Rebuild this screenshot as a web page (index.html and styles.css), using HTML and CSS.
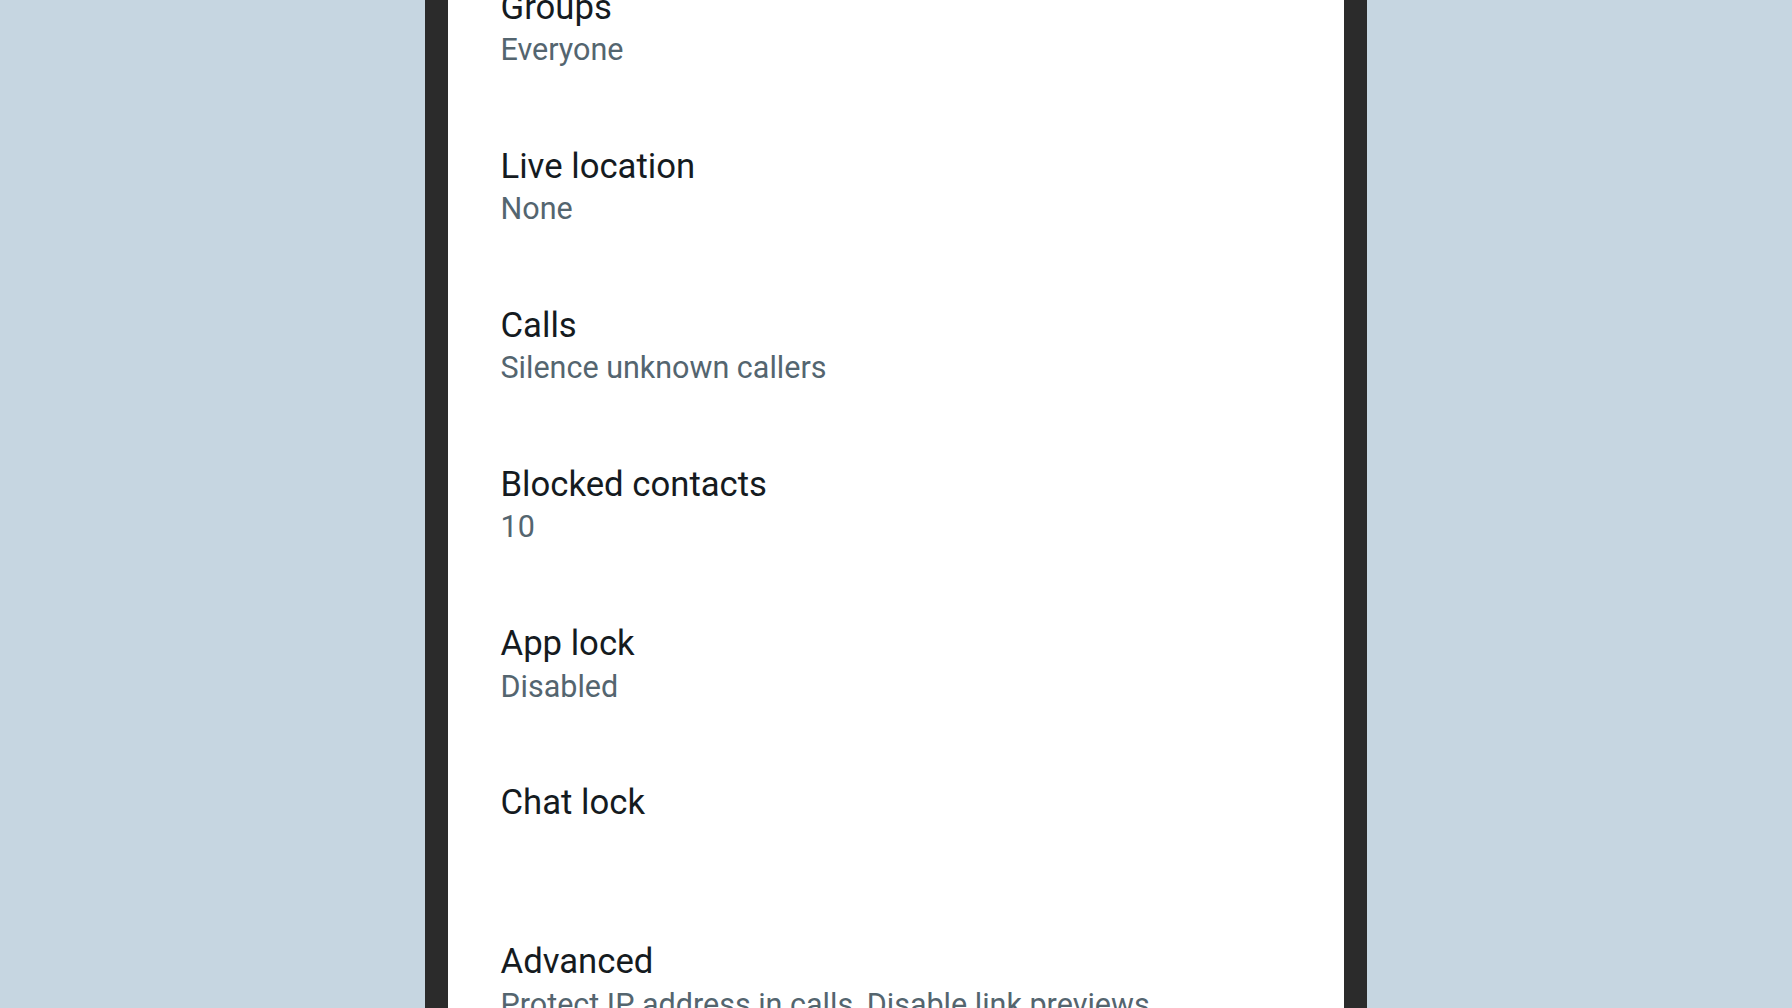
FILE: index.html
```html
<!DOCTYPE html>
<html lang="en">
<head>
<meta charset="utf-8">
<title>Privacy</title>
<link rel="stylesheet" href="styles.css">
</head>
<body>
<div class="stage">
  <div class="phone">
    <div class="screen">
      <ul class="list">
        <li class="row"><div class="title">Groups</div><div class="sub">Everyone</div></li>
        <li class="row"><div class="title">Live location</div><div class="sub">None</div></li>
        <li class="row"><div class="title">Calls</div><div class="sub">Silence unknown callers</div></li>
        <li class="row"><div class="title">Blocked contacts</div><div class="sub">10</div></li>
        <li class="row"><div class="title">App lock</div><div class="sub">Disabled</div></li>
        <li class="row"><div class="title">Chat lock</div></li>
        <li class="row"><div class="title">Advanced</div><div class="sub">Protect IP address in calls, Disable link previews</div></li>
      </ul>
    </div>
  </div>
</div>
</body>
</html>
```
FILE: styles.css
```css
html, body {
  margin: 0;
  padding: 0;
  height: 100%;
  overflow: hidden;
}
body {
  background: #c6d6e1;
  font-family: Roboto, "Noto Sans", "Liberation Sans", sans-serif;
}
.stage {
  display: flex;
  justify-content: center;
  height: 100%;
}
.phone {
  width: 896px;
  height: 100%;
  background: #2b2b2b;
  padding: 0 23px;
  display: flex;
}
.screen {
  flex: 1;
  background: #ffffff;
  overflow: hidden;
}
.list {
  list-style: none;
  margin: -15.3px 0 0 0;
  padding: 0;
}
.row {
  height: 159.1px;
  padding-left: 52.5px;
  box-sizing: border-box;
}
.title {
  font-size: 34.7px;
  line-height: 44px;
  color: #151b1f;
}
.sub {
  margin-top: -0.5px;
  font-size: 30.5px;
  line-height: 44px;
  color: #54656f;
}
```
